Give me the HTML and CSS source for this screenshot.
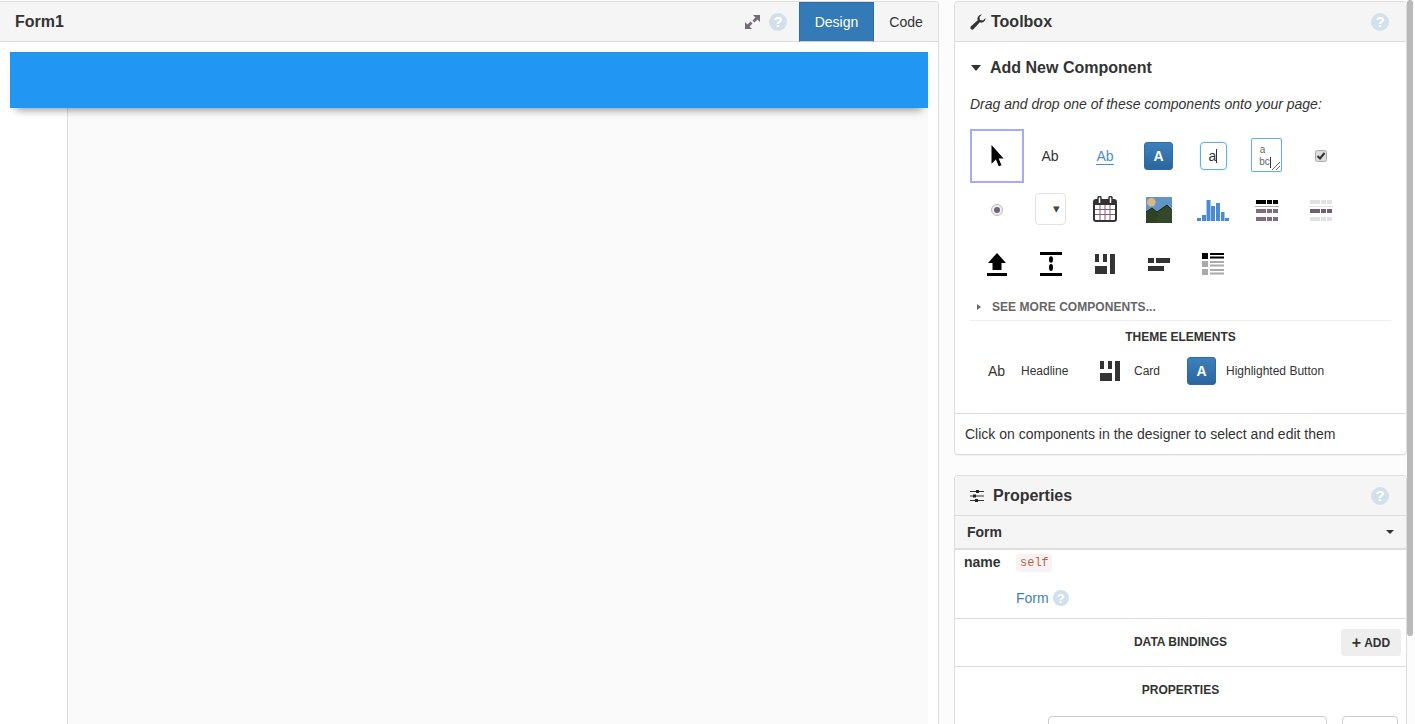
FILE: index.html
```html
<!DOCTYPE html>
<html lang="en">
<head>
<meta charset="utf-8">
<title>Form1 designer</title>
<link rel="stylesheet" href="styles.css">
</head>
<body>
<div class="page">
  <section class="designer">
    <header class="designer-head">
      <span class="form-title">Form1</span>
      <svg class="expand" viewBox="0 0 15 14"><path d="M8 0h7v7l-2.500-2.500-3 3-2-2 3-3zM7 14H0V7l2.500 2.500 3-3 2 2-3 3z"/></svg>
      <span class="help help-head">?</span>
      <span class="tab tab-active">Design</span>
      <span class="tab tab-code">Code</span>
    </header>
    <div class="designer-body">
      <div class="appbar"></div>
      <div class="canvas-row">
        <div class="canvas-gutter"></div>
        <div class="canvas"></div>
      </div>
    </div>
  </section>

  <aside class="sidebar">
    <section class="panel toolbox">
      <header class="panel-head">
        <svg class="head-icon" viewBox="0 0 16 16"><path d="M15.500 4.100a4.300 4.300 0 0 1-5.700 4.200L3.700 15a1.900 1.900 0 0 1-2.700-2.700l6.700-6.100A4.300 4.300 0 0 1 12 .500l-2.500 2.500.5 2.900 2.900.5z"/></svg>
        <span class="panel-title">Toolbox</span>
        <span class="help">?</span>
      </header>
      <div class="toolbox-body">
        <div class="add-row"><span class="caret"></span><span class="add-title">Add New Component</span></div>
        <p class="hint">Drag and drop one of these components onto your page:</p>
        <div class="grid">
          <div class="cell cell-selected"><svg width="16" height="22" viewBox="0 0 12 20"><path d="M1 0v17l4-3.800 2.600 6.200 2.500-1.100-2.600-6H12z"/></svg></div>
          <div class="cell"><span class="ab ab-plain">Ab</span></div>
          <div class="cell"><span class="ab ab-link">Ab</span></div>
          <div class="cell"><span class="btn-a btn-grid">A</span></div>
          <div class="cell"><span class="textbox">a<i class="cursor"></i></span></div>
          <div class="cell"><span class="textarea"><span class="ta-a">a</span><span class="ta-b">bc<i class="cursor"></i></span><svg class="grip" width="8" height="8" viewBox="0 0 8 8"><path d="M0 8l8-8M4 8l4-4" stroke="#666" fill="none"/></svg></span></div>
          <div class="cell"><svg width="12" height="12" viewBox="0 0 12 12"><rect x=".5" y=".5" width="11" height="11" rx="2" fill="#ddd" stroke="#aaa"/><path d="M2.500 6l2.500 2.500 4.500-5.500" fill="none" stroke="#333" stroke-width="2"/></svg></div>

          <div class="cell"><svg width="12" height="12" viewBox="0 0 12 12"><circle cx="6" cy="6" r="5.500" fill="#eee" stroke="#bbb"/><circle cx="6" cy="6" r="3" fill="#6f6377"/></svg></div>
          <div class="cell"><span class="dropdown">▾</span></div>
          <div class="cell"><svg class="calendar" width="24" height="26" viewBox="0 0 24 26"><rect x="1" y="4" width="22" height="21" rx="2" fill="#fff" stroke="#333" stroke-width="2"/><rect x="1" y="4" width="22" height="5" fill="#333"/><path d="M5 7V2a1.500 1.500 0 0 1 3 0v5M16 7V2a1.500 1.500 0 0 1 3 0v5" fill="#fff" stroke="#333" stroke-width="1.500"/><path d="M2 13.500h20M2 18.500h20M7 9v15M12 9v15M17 9v15" stroke="#8a5a70" stroke-width="1"/></svg></div>
          <div class="cell"><svg width="26" height="26" viewBox="0 0 26 26"><rect width="26" height="26" fill="#6394c6"/><circle cx="5.300" cy="5.300" r="4.300" fill="#d9b98a"/><path d="M0 26V15l6-4 5 4 10-7 5 5v13z" fill="#2e4324"/><path d="M11 26V15l10-7 5 5v13z" fill="#33472a"/><path d="M0 15l6-4 5 4 10-7 5 5" fill="none" stroke="#1f2a1c"/></svg></div>
          <div class="cell"><svg width="32" height="21" viewBox="0 0 32 21"><g fill="#4a8bd6"><rect y="18" width="4" height="3"/><rect x="5" y="15" width="4" height="6"/><rect x="9.500" y="0" width="4" height="21"/><rect x="14" y="6" width="4" height="15"/><rect x="19" y="3" width="4" height="18"/><rect x="24" y="12" width="3.500" height="9"/><rect x="28" y="18" width="4" height="3"/></g></svg></div>
          <div class="cell"><svg width="24" height="21" viewBox="0 0 24 21"><path d="M1 0h10v4H1zM12 0h5v4h-5zM18 0h5v4h-5z"/><path d="M0 6h24v1H0z" fill="#aaa"/><path d="M1 9h10v4H1zM12 9h5v4h-5zM18 9h5v4h-5zM1 17h10v4H1zM12 17h5v4h-5zM18 17h5v4h-5z" fill="#806a7c"/></svg></div>
          <div class="cell"><svg width="24" height="21" viewBox="0 0 24 21"><path d="M1 0h10v4H1zM12 0h5v4h-5zM18 0h5v4h-5zM1 17h10v4H1zM12 17h5v4h-5zM18 17h5v4h-5z" fill="#e2e2e2"/><path d="M0 6h24v1H0z" fill="#e2e2e2"/><path d="M1 9h10v4H1zM12 9h5v4h-5zM18 9h5v4h-5z" fill="#6f6272"/></svg></div>

          <div class="cell"><svg width="20" height="23" viewBox="0 0 20 23"><path d="M10 0l9 10h-4.500v7h-9v-7H1zM0 20h20v3H0z"/></svg></div>
          <div class="cell"><svg width="22" height="24" viewBox="0 0 22 24"><path d="M0 0h22v3H0zM0 21h22v3H0z"/><ellipse cx="11" cy="7.500" rx="2" ry="3.200"/><ellipse cx="11" cy="15.500" rx="2" ry="3.400"/></svg></div>
          <div class="cell"><svg class="card-icon" viewBox="0 0 20 20"><path d="M0 0h4v8H0zM8 0h4v8H8zM15 0h5v20h-5zM0 12h12v8H0z"/></svg></div>
          <div class="cell"><svg width="22" height="13" viewBox="0 0 22 13"><path d="M0 0h6v5H0zM8 0h14v5H8zM0 8h16v5H0z" fill="#333"/></svg></div>
          <div class="cell"><svg width="22" height="23" viewBox="0 0 22 23"><path d="M0 0h6v6H0zM8 0h14v2H8zM8 3.500h14v2H8z"/><path d="M0 8h6v6H0zM0 16h6v6H0zM8 8h14v2H8zM8 11.500h14v2H8zM8 16h14v2H8zM8 19.500h14v2H8z" fill="#aaa"/></svg></div>
        </div>
        <div class="more"><span class="caret-right"></span><span>See more components...</span></div>
        <div class="theme-title">THEME ELEMENTS</div>
        <div class="theme-row">
          <span class="ab theme-ab">Ab</span><span class="theme-label label-headline">Headline</span>
          <svg class="card-icon theme-card" viewBox="0 0 20 20"><path d="M0 0h4v8H0zM8 0h4v8H8zM15 0h5v20h-5zM0 12h12v8H0z"/></svg><span class="theme-label label-card">Card</span>
          <span class="btn-a btn-theme">A</span><span class="theme-label">Highlighted Button</span>
        </div>
      </div>
      <div class="panel-foot">Click on components in the designer to select and edit them</div>
    </section>

    <section class="panel properties">
      <header class="panel-head">
        <svg class="head-icon sliders" viewBox="0 0 14 12"><path d="M0 1.500h14M0 6h14M0 10.500h14" stroke="#333" fill="none"/><path d="M6 0h3v3H6zM3 4.500h3v3H3zM5 9h3v3H5z"/></svg>
        <span class="panel-title">Properties</span>
        <span class="help">?</span>
      </header>
      <div class="form-row"><span>Form</span><span class="caret caret-small"></span></div>
      <div class="name-row"><span class="name-label">name</span><code class="self">self</code></div>
      <div class="link-row"><span class="form-link">Form</span><span class="help help-small">?</span></div>
      <div class="bindings"><span>DATA BINDINGS</span><span class="add-btn"><b>+</b> ADD</span></div>
      <div class="props-title">PROPERTIES</div>
      <div class="input-row"><span class="input"></span><span class="input-btn"></span></div>
    </section>
  </aside>
  <div class="scroll"><div class="thumb"></div></div>
</div>
</body>
</html>
```
FILE: styles.css
```css
* { box-sizing: border-box; }
html, body { margin: 0; height: 100%; overflow: hidden; }
body { background: #fcfcfc; font: 14px/20px "Liberation Sans", Arial, sans-serif; color: #333; }
.page { display: flex; height: 724px; padding-top: 1px; overflow: hidden; }

.designer { width: 939px; flex: none; height: 723px; background: #fff; border: 1px solid #ddd; border-left: 0; border-bottom: 0; border-radius: 0 4px 0 0; }
.designer-head { display: flex; align-items: center; height: 40px; background: #f5f5f5; border-bottom: 1px solid #ddd; padding-left: 15px; }
.form-title { font-size: 16px; font-weight: bold; flex: 1; }
.expand { width: 15px; height: 14px; fill: #75697a; margin-right: 9px; }
.help { display: inline-flex; align-items: center; justify-content: center; width: 18px; height: 18px; border-radius: 50%; background: #d2e0ec; color: #fff; font-size: 15px; font-weight: bold; line-height: 1; }
.help-head { margin-right: 12px; }
.tab { display: flex; align-items: center; justify-content: center; height: 40px; margin-top: -1px; margin-bottom: -1px; }
.tab-active { width: 75px; background: #337ab7; color: #fff; border: 1px solid #2e6da4; border-bottom-color: #ccc; }
.tab-code { width: 64px; }
.designer-body { padding: 10px 10px 0; }
.appbar { height: 56px; background: #2196f3; box-shadow: 0 8px 8px -6px rgba(0,0,0,.42); position: relative; }
.canvas-row { display: flex; height: 640px; }
.canvas-gutter { width: 58px; border-right: 1px solid #ddd; }
.canvas { flex: 1; background: #fafafa; }

.sidebar { width: 453px; flex: none; margin-left: 15px; display: flex; flex-direction: column; gap: 20px; }
.panel { background: #fff; border: 1px solid #ddd; border-radius: 4px; box-shadow: 0 1px 1px rgba(0,0,0,.05); }
.panel-head { display: flex; align-items: center; height: 40px; background: #f5f5f5; border-bottom: 1px solid #ddd; padding: 0 17px 0 15px; border-radius: 4px 4px 0 0; }
.panel-title { font-size: 16px; font-weight: bold; flex: 1; }
.head-icon { width: 16px; height: 16px; fill: #333; margin-right: 5px; }
.sliders { width: 14px; height: 12px; margin-right: 9px; fill: #222; }

.toolbox { height: 454px; }
.toolbox-body { padding: 0 15px; height: 355px; }
.add-row { display: flex; align-items: center; height: 20px; margin-top: 16px; }
.caret { width: 0; height: 0; border: 5.500px solid transparent; border-top: 6px solid #333; border-bottom: 0; margin-left: 1px; margin-right: 9px; }
.caret-small { border-width: 4px 4px 0; border-top-color: #333; border-left-color: transparent; border-right-color: transparent; margin: 0; }
.add-title { font-size: 16px; font-weight: bold; }
.hint { margin: 16px 0 15px; font-style: italic; }
.grid { display: grid; grid-template-columns: repeat(7, 54px); grid-auto-rows: 54px; }
.cell { display: flex; align-items: center; justify-content: center; }
.cell-selected { border: 2px solid #a3abff; }
.ab { font-size: 14px; color: #333; }
.ab-plain { margin-right: 2px; }
.ab-link { color: #4a8bd6; border-bottom: 1px solid #4a8bd6; line-height: 15px; margin-top: 2px; }
.btn-a { display: flex; align-items: center; justify-content: center; width: 29px; height: 28px; border-radius: 3px; background: linear-gradient(#3d80bd, #2c659d); border: 1px solid #2e6da4; color: #fff; font-weight: bold; font-size: 14px; }
.btn-grid { margin-right: 1px; }
.textbox { display: flex; align-items: center; justify-content: center; width: 27px; height: 28px; border: 1px solid #62aeea; border-radius: 4px; box-shadow: 0 0 2px #bfe0f8; font-size: 14px; }
.cursor { display: inline-block; width: 1px; height: 14px; background: #333; vertical-align: middle; }
.textarea { display: flex; flex-direction: column; align-items: center; width: 31px; height: 34px; border: 1px solid #62aeea; border-radius: 2px; font-size: 10px; line-height: 12px; color: #666; padding: 5px 0 0 0; position: relative; margin-right: 1px; margin-bottom: 2px; }
.ta-a { margin-right: 8px; }
.ta-b { margin-right: 3px; }
.ta-b .cursor { height: 11px; }
.grip { position: absolute; right: 1px; bottom: 1px; }
.dropdown { display: flex; align-items: center; justify-content: flex-end; width: 31px; height: 32px; border: 1px solid #e2e2e2; border-radius: 4px; font-size: 13px; color: #444; padding-right: 5px; margin-right: 1px; margin-bottom: 2px; }
.calendar { margin-bottom: 2px; }
.card-icon { width: 20px; height: 20px; fill: #333; }

.more { display: flex; align-items: center; height: 30px; padding-top: 2px; border-bottom: 1px solid #eee; font-size: 12px; font-weight: bold; color: #666; text-transform: uppercase; letter-spacing: .05px; width: 421px; }
.caret-right { width: 0; height: 0; border-left: 4px solid #666; border-top: 3px solid transparent; border-bottom: 3px solid transparent; margin: 0 11px 0 7px; }
.theme-title { text-align: center; font-size: 12px; font-weight: bold; margin-top: 6px; }
.theme-row { display: flex; align-items: center; font-size: 12px; height: 30px; margin-top: 9px; margin-left: 18px; }
.theme-ab { width: 33px; }
.theme-label { font-size: 12px; }
.label-headline { width: 79px; }
.theme-card { margin-right: 14px; }
.label-card { width: 53px; }
.btn-theme { margin-right: 10px; }
.panel-foot { border-top: 1px solid #ddd; padding: 10px; height: 42px; }

.properties { height: 400px; }
.form-row { display: flex; align-items: center; justify-content: space-between; height: 34px; background: #f5f5f5; border-bottom: 2px solid #ddd; padding: 0 12px; font-weight: bold; }
.name-row { display: flex; align-items: center; height: 24px; padding-left: 9px; }
.name-label { font-weight: bold; width: 52px; }
.self { background: #f9f2f4; color: #b8653c; font: 12px "Liberation Mono", monospace; padding: 2px 4px; border-radius: 3px; margin-top: 2px; width: 36px; }
.link-row { display: flex; align-items: center; height: 45px; padding-left: 61px; border-bottom: 1px solid #ddd; padding-top: 4px; }
.form-link { color: #3d82bd; margin-right: 4px; }
.help-small { width: 16px; height: 16px; font-size: 13px; }
.bindings { display: flex; align-items: center; justify-content: center; position: relative; height: 48px; padding-bottom: 2px; border-bottom: 1px solid #ddd; font-size: 12px; font-weight: bold; }
.add-btn { position: absolute; right: 5px; top: 10px; display: flex; align-items: center; justify-content: center; width: 60px; height: 27px; background: #eee; border-radius: 3px; }
.add-btn b { font-size: 16px; margin-right: 3px; }
.props-title { text-align: center; font-size: 12px; font-weight: bold; margin-top: 13px; }
.input-row { display: flex; margin-top: 16px; padding-left: 93px; }
.input { width: 279px; height: 34px; border: 1px solid #ccc; border-radius: 4px; }
.input-btn { width: 56px; height: 34px; border: 1px solid #ccc; border-radius: 4px; margin-left: 15px; }

.scroll { width: 8px; margin-top: -1px; }
.thumb { width: 6px; height: 636px; background: #b9b9b9; border-radius: 3px; }
```
